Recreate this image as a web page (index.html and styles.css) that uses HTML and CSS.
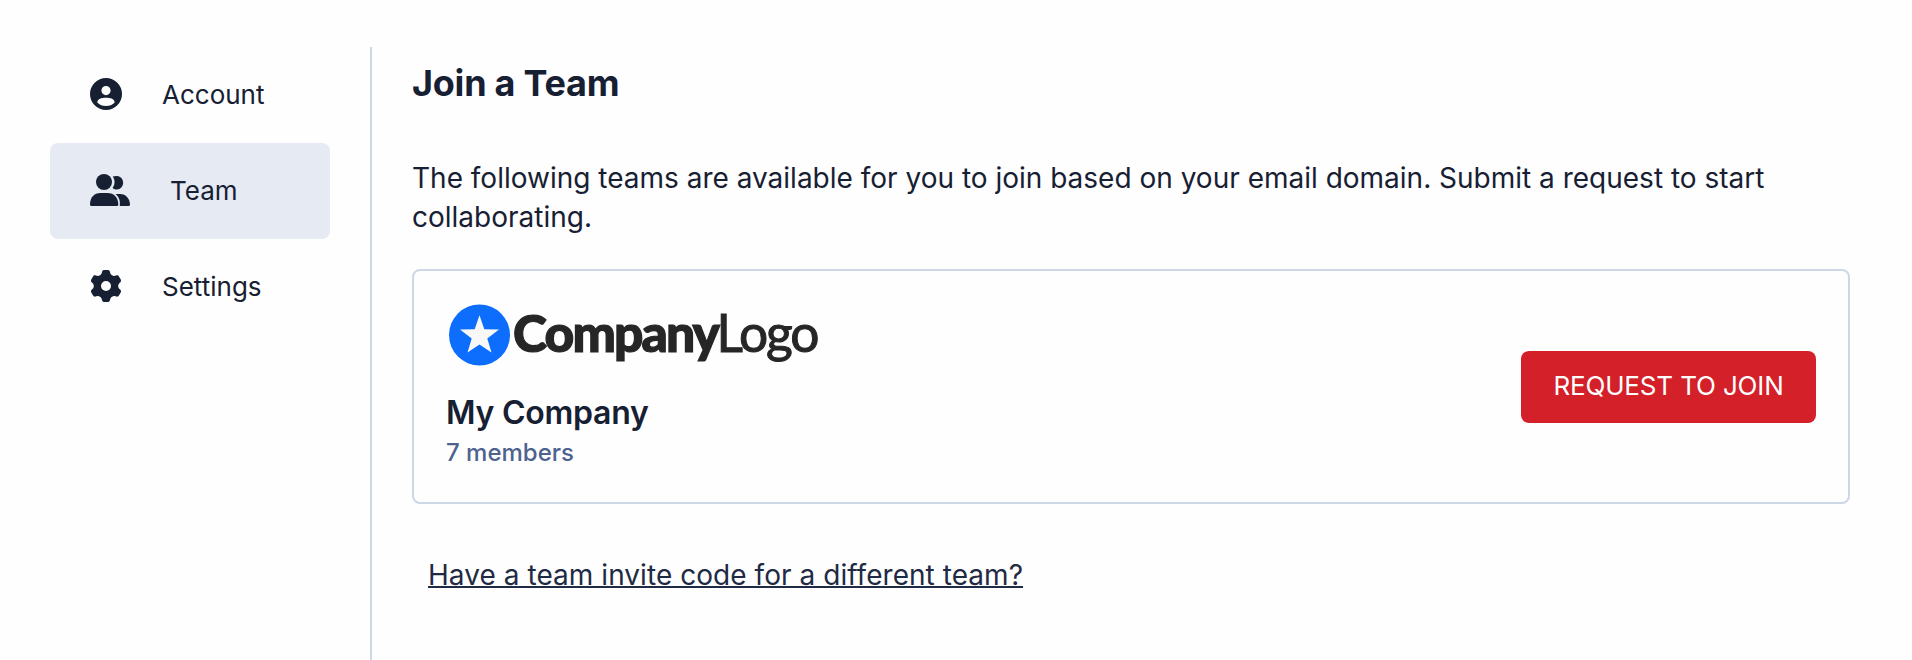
FILE: index.html
```html
<!DOCTYPE html>
<html lang="en">
<head>
    <meta charset="UTF-8">
    <meta name="viewport" content="width=device-width, initial-scale=1.0">
    <title>Join a Team</title>
    <link rel="stylesheet" href="styles.css">
</head>
<body>
    <div class="container">
        <!-- Side navigation -->
        <nav class="sidebar">
            <a class="nav-item" href="#">
                <svg class="icon" viewBox="0 0 32 32" width="32" height="32">
                    <path fill-rule="evenodd" d="M16 0a16 16 0 1 0 0 32a16 16 0 1 0 0-32zM16 8a4.6 4.6 0 1 1 0 9.2a4.6 4.6 0 1 1 0-9.2zM7.3 24.6C7.3 21 11.5 19.7 16 19.7S24.7 21 24.7 24.6C22.5 27 19.5 28.1 16 28.1S9.500 27 7.300 24.600z"/>
                </svg>
                <span>Account</span>
            </a>
            <a class="nav-item active" href="#">
                <svg class="icon" viewBox="0 0 40 32" width="40" height="32">
                    <circle cx="14" cy="8" r="8"/>
                    <path d="M0 30.500C0 23.500 4 19 10.500 19H17.500C24 19 28.300 23.500 28.300 30.500Q28.300 32 26.800 32H1.500Q0 32 0 30.500z"/>
                    <path d="M22.800 2.600C24.600 1.900 26 1.800 27.400 2A6.800 6.800 0 0 1 27 15.500C25.400 15.500 23.800 15 22.600 14A10 10 0 0 0 22.800 2.600z"/>
                    <path d="M25.500 20H30C36 20 40 25 40 30.500Q40 32 38.500 32H29.700C30.500 27.500 29.300 23 25.500 20z"/>
                </svg>
                <span>Team</span>
            </a>
            <a class="nav-item" href="#">
                <svg class="icon" viewBox="0 0 32 32" width="32" height="32">
                    <defs>
                        <path id="tooth" d="M12 2C12.300 .6 13.200 0 14.500 0H17.500C18.800 0 19.700 .6 20 2C20.400 3.800 20.700 4.600 22.300 5.600L16 9L9.700 5.600C11.300 4.600 11.600 3.800 12 2z"/>
                    </defs>
                    <use href="#tooth"/>
                    <use href="#tooth" transform="rotate(60 16 16)"/>
                    <use href="#tooth" transform="rotate(120 16 16)"/>
                    <use href="#tooth" transform="rotate(180 16 16)"/>
                    <use href="#tooth" transform="rotate(240 16 16)"/>
                    <use href="#tooth" transform="rotate(300 16 16)"/>
                    <circle class="gear-ring" cx="16" cy="16" r="8.500"/>
                </svg>
                <span>Settings</span>
            </a>
        </nav>

        <!-- Main content -->
        <main class="content">
            <h2>Join a Team</h2>
            <p class="description">The following teams are available for you to join based on your email domain. Submit a request to start collaborating.</p>

            <div class="team-card">
                <div class="team-info">
                    <svg class="logo" viewBox="0 0 380 66" width="380" height="66">
                        <circle class="logo-circle" cx="33.500" cy="33" r="30.500"/>
                        <path class="logo-star" d="M33.500 13.200L38.300 27.200L53 27.500L41.300 36.600L45.500 50.600L33.500 42.500L21.500 50.600L25.700 36.600L14 27.500L28.700 27.200z"/>
                        <text class="logo-bold" x="67" y="49.500" textLength="207">Company</text>
                        <text class="logo-light" x="270.500" y="49.500" textLength="103">Logo</text>
                    </svg>
                    <h3>My Company</h3>
                    <span class="members">7 members</span>
                </div>
                <button class="join-button" type="button">REQUEST TO JOIN</button>
            </div>

            <a class="invite-link" href="#">Have a team invite code for a different team?</a>
        </main>
    </div>
</body>
</html>
```
FILE: styles.css
```css
* {
    box-sizing: border-box;
}

body {
    margin: 0;
    font-family: Inter, sans-serif;
    background-color: #fefefe;
    color: #172033;
}

.container {
    display: flex;
    height: 660px;
    padding: 47px 62px 0 50px;
}

/* Side navigation */
.sidebar {
    width: 322px;
    padding-right: 40px;
    border-right: 2px solid #cdd7e5;
}

.nav-item {
    display: flex;
    align-items: center;
    gap: 40px;
    height: 96px;
    padding: 0 40px 2px;
    border-radius: 8px;
    color: #172033;
    font-size: 26px;
    text-decoration: none;
}

.nav-item.active {
    background-color: #e5eaf3;
}

.icon {
    fill: #172033;
    flex-shrink: 0;
}

.gear-ring {
    fill: none;
    stroke: #172033;
    stroke-width: 7;
}

/* Main content */
.content {
    flex: 1;
    padding: 14px 0 0 40px;
}

h2 {
    margin: 0;
    font-size: 36px;
    font-weight: 700;
    line-height: 44px;
    letter-spacing: -0.25px;
}

.description {
    margin: 54px 0 32px;
    font-size: 28px;
    line-height: 39px;
}

.team-card {
    display: flex;
    justify-content: space-between;
    align-items: center;
    height: 235px;
    padding: 0 32px;
    border: 2px solid #cdd7e5;
    border-radius: 8px;
}

.team-info {
    display: flex;
    flex-direction: column;
}

h3 {
    margin: 25px 0 0;
    font-size: 32px;
    font-weight: 600;
    line-height: 40px;
    letter-spacing: -0.25px;
}

.members {
    color: #4d628f;
    font-size: 24px;
    font-weight: 500;
    line-height: 39px;
}

.join-button {
    width: 295px;
    height: 72px;
    padding: 0 0 2px;
    border: none;
    border-radius: 8px;
    background-color: #d32029;
    color: white;
    font-family: inherit;
    font-size: 26px;
    letter-spacing: -0.15px;
    cursor: pointer;
}

.invite-link {
    display: inline-block;
    margin: 54px 0 0 16px;
    color: #1f2a44;
    font-size: 28px;
    line-height: 34px;
    letter-spacing: 0.05px;
    text-decoration-thickness: 2px;
}

/* Company logo */
.logo-circle {
    fill: #0d6efd;
}

.logo-star {
    fill: #f8f8f8;
}

.logo-bold, .logo-light {
    font-family: Lato, sans-serif;
    font-size: 51.5px;
    fill: #262626;
    stroke: #262626;
}

.logo-bold {
    font-weight: 900;
    stroke-width: 1.2px;
}

.logo-light {
    stroke-width: 1px;
}
```
